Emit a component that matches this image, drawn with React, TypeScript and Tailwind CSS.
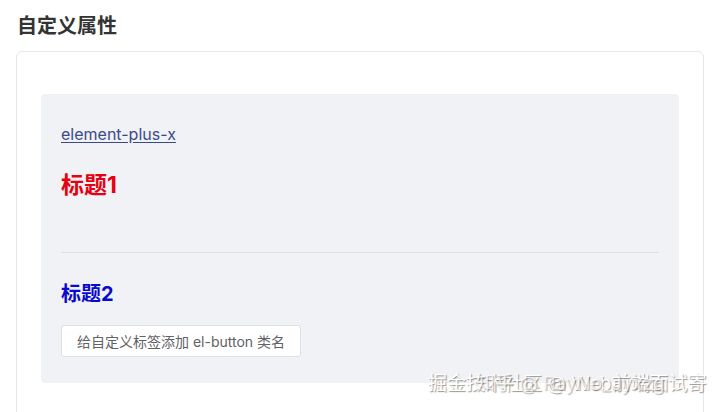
import React from "react";

export default function App() {
  return (
    <div
      className="relative w-[718px] h-[412px] overflow-hidden bg-white"
      style={{ fontFamily: 'Inter, "Noto Sans CJK SC", sans-serif' }}
    >
      <div className="pl-[17px] pt-[12px]">
        <h2 className="text-[20px] leading-[28px] font-bold text-[#333]">自定义属性</h2>
      </div>
      <div className="ml-[16px] mt-[11px] w-[688px] h-[400px] border border-[#e4e7ed] rounded-[6px] px-[24px] pt-[42px]">
        <div className="bg-[#f0f2f5] rounded-[4px] px-[20px] pt-[30px] pb-[26px]">
          <a className="block text-[16px] leading-[20px] text-[#3d4a8a] underline underline-offset-2 decoration-[#3d4a8a]">
            element-plus-x
          </a>
          <div className="mt-[26px] text-[23px] leading-[30px] font-bold text-[#e60012]">标题1</div>
          <div className="mt-[52px] h-px bg-[#dcdfe6]" />
          <div className="mt-[27px] text-[20px] leading-[28px] font-bold text-[#0a0acc]">标题2</div>
          <button className="mt-[17px] h-[32px] px-[15px] bg-white border border-[#dcdfe6] rounded-[3px] text-[14px] text-[#606266]">
            给自定义标签添加 el-button 类名
          </button>
        </div>
      </div>
      <div
        className="absolute left-[428px] top-[372px] text-[19px] leading-[24px] text-white whitespace-nowrap"
        style={{ textShadow: "1px 1px 1px rgba(60,60,60,0.55)" }}
      >
        掘金技术社区 @ Web前端面试寄
      </div>
      <div
        className="absolute left-[476px] top-[372px] text-[19px] leading-[24px] text-white/70 whitespace-nowrap"
        style={{ textShadow: "1px 1px 1px rgba(60,60,60,0.4)" }}
      >
        知乎 @ RayNo_Jyxzg
      </div>
    </div>
  );
}
